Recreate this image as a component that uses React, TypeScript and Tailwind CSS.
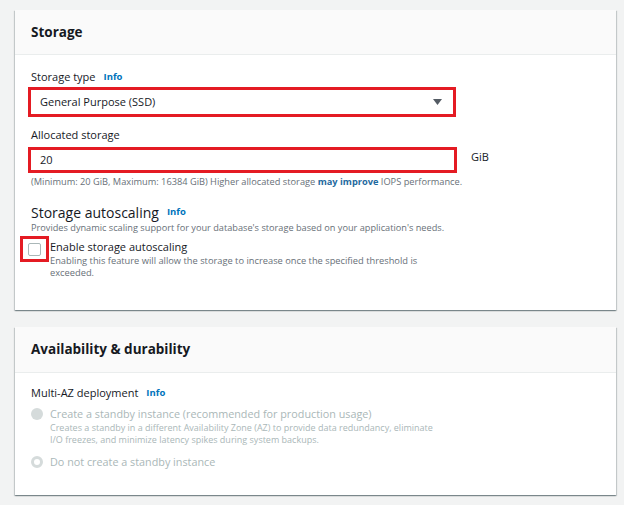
import React from "react";

const font = { fontFamily: '"Open Sans", "Noto Sans", sans-serif' };

function Info({ className = "" }: { className?: string }) {
  return (
    <span className={`text-[9.5px] font-bold text-[#0073bb] ${className}`}>Info</span>
  );
}

export default function App() {
  return (
    <div
      className="w-[624px] h-[505px] bg-[#f2f3f3] pt-[10px] pl-[15px] text-[#16191f] overflow-hidden"
      style={font}
    >
      {/* Storage card */}
      <div className="w-[601px] h-[300px] bg-white shadow-[0_1px_1px_0_rgba(0,28,36,0.3),1px_1px_1px_0_rgba(0,28,36,0.15),-1px_1px_1px_0_rgba(0,28,36,0.15)]">
        <div className="h-[45px] bg-[#fafafa] border-b border-[#eaeded] flex items-center px-[16px]">
          <h2 className="text-[13.5px] font-bold">Storage</h2>
        </div>
        <div className="px-[16px] pt-[14px]">
          <div className="flex items-center gap-[8px] h-[16px] text-[11px]">
            <span>Storage type</span>
            <Info />
          </div>
          <div className="-ml-[3px] mt-[2px] w-[428px] h-[30px] border-[3px] border-[#e41b23] bg-white flex items-center justify-between pl-[9px] pr-[11px]">
            <span className="text-[11px]">General Purpose (SSD)</span>
            <svg width="9" height="6" viewBox="0 0 9 6">
              <path d="M0 0 L9 0 L4.5 6 Z" fill="#545b64" />
            </svg>
          </div>

          <div className="mt-[10px] h-[16px] flex items-center text-[11px]">Allocated storage</div>
          <div className="mt-[4px] flex items-center">
            <div className="-ml-[3px] w-[429px] h-[26px] border-[3px] border-[#e41b23] bg-white flex items-center pl-[9px]">
              <span className="text-[11px]">20</span>
            </div>
            <span className="ml-[14px] -mt-[6px] text-[11px]">GiB</span>
          </div>
          <div className="mt-[2px] text-[9.25px] text-[#687078] leading-[14px]">
            (Minimum: 20 GiB, Maximum: 16384 GiB) Higher allocated storage{" "}
            <span className="font-bold text-[#1f6aa0]">may improve</span> IOPS performance.
          </div>

          <div className="mt-[14px] flex items-center gap-[8px] h-[18px]">
            <span className="text-[14px]">Storage autoscaling</span>
            <Info className="mt-[1px]" />
          </div>
          <div className="text-[9.2px] text-[#687078] leading-[14px]">
            Provides dynamic scaling support for your database's storage based on your application's needs.
          </div>

          <div className="mt-[1px] -ml-[11px] flex items-start">
            <div className="w-[29px] h-[26px] border-[3px] border-[#e41b23] flex items-center justify-center shrink-0">
              <div className="w-[13px] h-[13px] rounded-[2px] border border-[#aab7b8] bg-white" />
            </div>
            <div className="ml-[1px] mt-[3px]">
              <div className="text-[11px] leading-[16px]">Enable storage autoscaling</div>
              <div className="text-[9.3px] text-[#687078] leading-[12px] w-[385px]">
                Enabling this feature will allow the storage to increase once the specified threshold is exceeded.
              </div>
            </div>
          </div>
        </div>
      </div>

      {/* Availability card */}
      <div className="mt-[17px] w-[601px] h-[168px] bg-white shadow-[0_1px_1px_0_rgba(0,28,36,0.3),1px_1px_1px_0_rgba(0,28,36,0.15),-1px_1px_1px_0_rgba(0,28,36,0.15)]">
        <div className="h-[46px] bg-[#fafafa] border-b border-[#eaeded] flex items-center px-[16px]">
          <h2 className="text-[13.5px] font-bold">Availability &amp; durability</h2>
        </div>
        <div className="px-[16px] pt-[12px]">
          <div className="flex items-center gap-[8px] h-[16px] text-[11px]">
            <span>Multi-AZ deployment</span>
            <Info />
          </div>
          <div className="mt-[5px] flex items-start">
            <div className="mt-[2px] w-[12px] h-[12px] rounded-full bg-[#d5dbdb] shrink-0" />
            <div className="ml-[7px]">
              <div className="text-[10.8px] leading-[16px] text-[#aab7b8]">
                Create a standby instance (recommended for production usage)
              </div>
              <div className="text-[9px] leading-[12px] text-[#aab7b8] w-[388px]">
                Creates a standby in a different Availability Zone (AZ) to provide data redundancy, eliminate I/O freezes, and minimize latency spikes during system backups.
              </div>
            </div>
          </div>
          <div className="mt-[8px] flex items-center">
            <div className="w-[12px] h-[12px] rounded-full border-[3px] border-[#d5dbdb] bg-white shrink-0" />
            <div className="ml-[7px] text-[10.8px] leading-[16px] text-[#aab7b8]">
              Do not create a standby instance
            </div>
          </div>
        </div>
      </div>
    </div>
  );
}
